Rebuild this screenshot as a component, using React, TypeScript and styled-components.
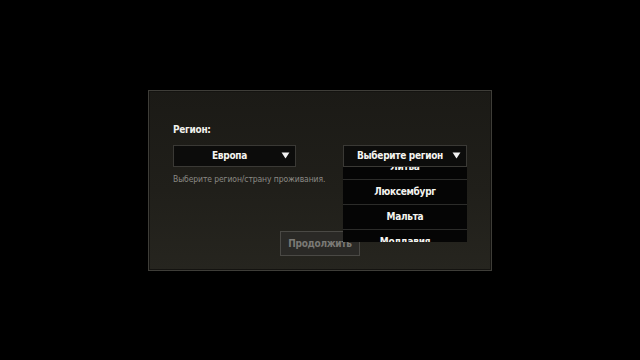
import {useLayoutEffect, useRef} from 'react';
import styled, {createGlobalStyle} from 'styled-components';

const countries = [
    'Австрия', 'Бельгия', 'Болгария', 'Великобритания', 'Венгрия', 'Германия',
    'Греция', 'Дания', 'Ирландия', 'Исландия', 'Испания', 'Италия', 'Кипр',
    'Латвия', 'Литва', 'Люксембург', 'Мальта', 'Молдавия', 'Монако',
    'Нидерланды', 'Норвегия', 'Польша', 'Португалия', 'Румыния',
];

const ITEM_HEIGHT = 25;

const GlobalStyle = createGlobalStyle`
    html, body {
        margin: 0;
        height: 100%;
        background: #000;
    }
    #root {
        height: 100%;
    }
    * {
        box-sizing: border-box;
    }
`;

function Arrow() {
    return (
        <ArrowIcon viewBox="0 0 10 8">
            <path d="M0.5 0.5 H9.5 L5 7.5 Z" fill="#f2f2f2" />
        </ArrowIcon>
    );
}

export default function App() {
    const listRef = useRef<HTMLDivElement>(null);

    useLayoutEffect(() => {
        // scroll so that "Литва" is partly cut off at the top
        if (listRef.current) {
            listRef.current.scrollTop = countries.indexOf('Литва') * ITEM_HEIGHT + 12;
        }
    }, []);

    return (
        <Screen>
            <GlobalStyle />
            <Panel>
                <Label>Регион:</Label>
                <Row>
                    <Column>
                        <Select>
                            <SelectText>Европа</SelectText>
                            <Arrow />
                        </Select>
                        <Hint>Выберите регион/страну проживания.</Hint>
                    </Column>
                    <DropdownWrap>
                        <Select>
                            <SelectText>Выберите регион</SelectText>
                            <Arrow />
                        </Select>
                        <List ref={listRef}>
                            {countries.map(c => <Option key={c}>{c}</Option>)}
                        </List>
                    </DropdownWrap>
                </Row>
                <ContinueButton disabled>Продолжить</ContinueButton>
            </Panel>
        </Screen>
    );
}

const Screen = styled.div`
    height: 100%;
    display: flex;
    align-items: center;
    justify-content: center;
    font-family: "DejaVu Sans Condensed", "Liberation Sans Narrow", "Liberation Sans", sans-serif;
    white-space: nowrap;
`;

const Panel = styled.div`
    width: 344px;
    height: 181px;
    padding: 33px 24px 14px;
    display: flex;
    flex-direction: column;
    background: linear-gradient(180deg, #1b1a16 0%, #201f1a 55%, #26251f 100%);
    border: 1px solid #3e3d38;
    box-shadow: inset 0 0 0 1px #141310;
`;

const Label = styled.div`
    color: #f0f0ec;
    font-size: 10px;
    font-weight: bold;
    letter-spacing: -0.3px;
    line-height: 11px;
    height: 11px;
`;

const Row = styled.div`
    margin-top: 10px;
    display: flex;
    justify-content: space-between;
    align-items: flex-start;
`;

const Column = styled.div`
    display: flex;
    flex-direction: column;
    width: 123px;
`;

const Select = styled.div`
    height: 22px;
    width: 100%;
    display: flex;
    align-items: center;
    padding: 0 5px 0 8px;
    background: #0c0c0b;
    border: 1px solid #3a3935;
`;

const SelectText = styled.span`
    flex: 1;
    text-align: center;
    color: #f4f4f0;
    font-size: 10px;
    font-weight: bold;
    letter-spacing: -0.3px;
    padding-right: 4px;
`;

const ArrowIcon = styled.svg`
    width: 9px;
    height: 7px;
    flex: none;
`;

const Hint = styled.div`
    margin-top: 6px;
    color: #8a8984;
    font-size: 8.5px;
    letter-spacing: -0.1px;
    line-height: 12px;
`;

const DropdownWrap = styled.div`
    position: relative;
    width: 124px;
`;

const List = styled.div`
    position: absolute;
    top: 100%;
    left: 0;
    right: 0;
    height: 75px;
    overflow-y: scroll;
    scrollbar-width: none;
    background: #050505;
    z-index: 2;

    &::-webkit-scrollbar {
        display: none;
    }
`;

const Option = styled.div`
    height: ${ITEM_HEIGHT}px;
    display: flex;
    align-items: center;
    justify-content: center;
    color: #f4f4f0;
    font-size: 10px;
    font-weight: bold;
    letter-spacing: -0.3px;
    border-bottom: 1px solid #2c2c2a;
`;

const ContinueButton = styled.button`
    margin: auto auto 0;
    width: 80px;
    height: 25px;
    padding: 0;
    background: #2a2926;
    border: 1px solid #4a4945;
    color: #7a7975;
    font-family: inherit;
    font-size: 10px;
    font-weight: bold;
    letter-spacing: -0.3px;
    cursor: default;
`;
